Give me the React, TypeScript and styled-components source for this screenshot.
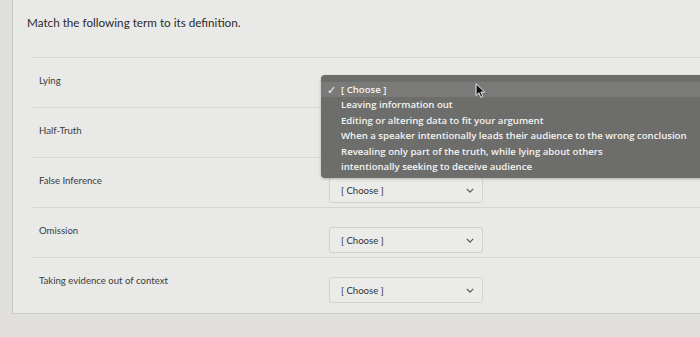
import styled, { createGlobalStyle } from "styled-components";

const terms = [
  "Lying",
  "Half-Truth",
  "False Inference",
  "Omission",
  "Taking evidence out of context",
];

const options = [
  "Leaving information out",
  "Editing or altering data to fit your argument",
  "When a speaker intentionally leads their audience to the wrong conclusion",
  "Revealing only part of the truth, while lying about others",
  "intentionally seeking to deceive audience",
];

export default function App() {
  return (
    <>
      <GlobalStyle />
      <Page>
        <Card>
          <Title>Match the following term to its definition.</Title>
          <Rows>
            {terms.map((term, i) => (
              <Row key={term} $last={i === terms.length - 1}>
                <Label>{term}</Label>
                {/* the open menu hides the first two selects */}
                <Select $hidden={i < 2}>
                  <span>[ Choose ]</span>
                  <Chevron viewBox="0 0 10 6">
                    <path d="M1 1l4 4 4-4" />
                  </Chevron>
                </Select>
                {i === 0 && (
                  <Menu>
                    <MenuItem $active>
                      <Check>✓</Check>[ Choose ]
                    </MenuItem>
                    {options.map((opt) => (
                      <MenuItem key={opt}>{opt}</MenuItem>
                    ))}
                    <Cursor viewBox="0 0 12 18">
                      <path
                        d="M1 1v13l3.2-3 2.3 5.2 2.2-1-2.3-5h4.4z"
                        fill="#111"
                        stroke="#fff"
                        strokeWidth="1"
                      />
                    </Cursor>
                  </Menu>
                )}
              </Row>
            ))}
          </Rows>
        </Card>
      </Page>
    </>
  );
}

const GlobalStyle = createGlobalStyle`
  body {
    margin: 0;
    background: #e0dfdc;
    font-family: Lato, "Open Sans", sans-serif;
    overflow: hidden;
  }
`;

const Page = styled.div`
  width: 700px;
  height: 337px;
  padding-left: 12px;
  box-sizing: border-box;
  overflow: hidden;
`;

const Card = styled.div`
  width: 720px;
  background: #e9e9e7;
  border-left: 1px solid #c6c6c4;
  border-bottom: 1px solid #cdcdcb;
  padding-left: 14px;
  box-sizing: border-box;
`;

const Title = styled.h1`
  margin: 0;
  padding-top: 15px;
  font-size: 11.7px;
  line-height: 15px;
  font-weight: 400;
  color: #2b2b2b;
`;

const Rows = styled.div`
  margin-top: 27px;
  margin-left: 6px;
`;

const Row = styled.div<{ $last?: boolean }>`
  position: relative;
  display: flex;
  align-items: flex-start;
  height: ${({ $last }) => ($last ? "56px" : "50px")};
  padding: 16px 0 0 6px;
  box-sizing: border-box;
  border-top: 1px solid #d6d6d4;
`;

const Label = styled.div`
  width: 290px;
  flex-shrink: 0;
  font-size: 9.6px;
  line-height: 13px;
  color: #3c3c3c;
`;

const Select = styled.div<{ $hidden?: boolean }>`
  visibility: ${({ $hidden }) => ($hidden ? "hidden" : "visible")};
  margin-top: 3px;
  width: 154px;
  height: 26px;
  box-sizing: border-box;
  display: flex;
  align-items: center;
  justify-content: space-between;
  padding: 0 8px 0 11px;
  background: #ebebe9;
  border: 1px solid #d2d2d0;
  border-radius: 3px;
  font-size: 9.6px;
  color: #333;
`;

const Chevron = styled.svg`
  width: 8px;
  height: 5px;
  fill: none;
  stroke: #555;
  stroke-width: 1.5;
`;

const Menu = styled.div`
  position: absolute;
  top: 17px;
  left: 288px;
  width: 420px;
  padding: 7px 0 4px;
  background: #6d6d6c;
  border-radius: 4px;
  box-shadow: 0 1px 3px rgba(0, 0, 0, 0.25);
  z-index: 2;
`;

const MenuItem = styled.div<{ $active?: boolean }>`
  position: relative;
  height: 15.4px;
  line-height: 15.4px;
  padding-left: 20px;
  font-family: "Open Sans", "DejaVu Sans", sans-serif;
  font-size: 9.6px;
  font-weight: 600;
  color: #f4f4f2;
  white-space: nowrap;
  background: ${({ $active }) => ($active ? "#7a7a79" : "transparent")};
`;

const Check = styled.span`
  position: absolute;
  left: 6px;
  font-size: 11px;
  font-weight: 700;
`;

const Cursor = styled.svg`
  position: absolute;
  left: 154px;
  top: 8px;
  width: 11px;
  height: 16px;
`;
